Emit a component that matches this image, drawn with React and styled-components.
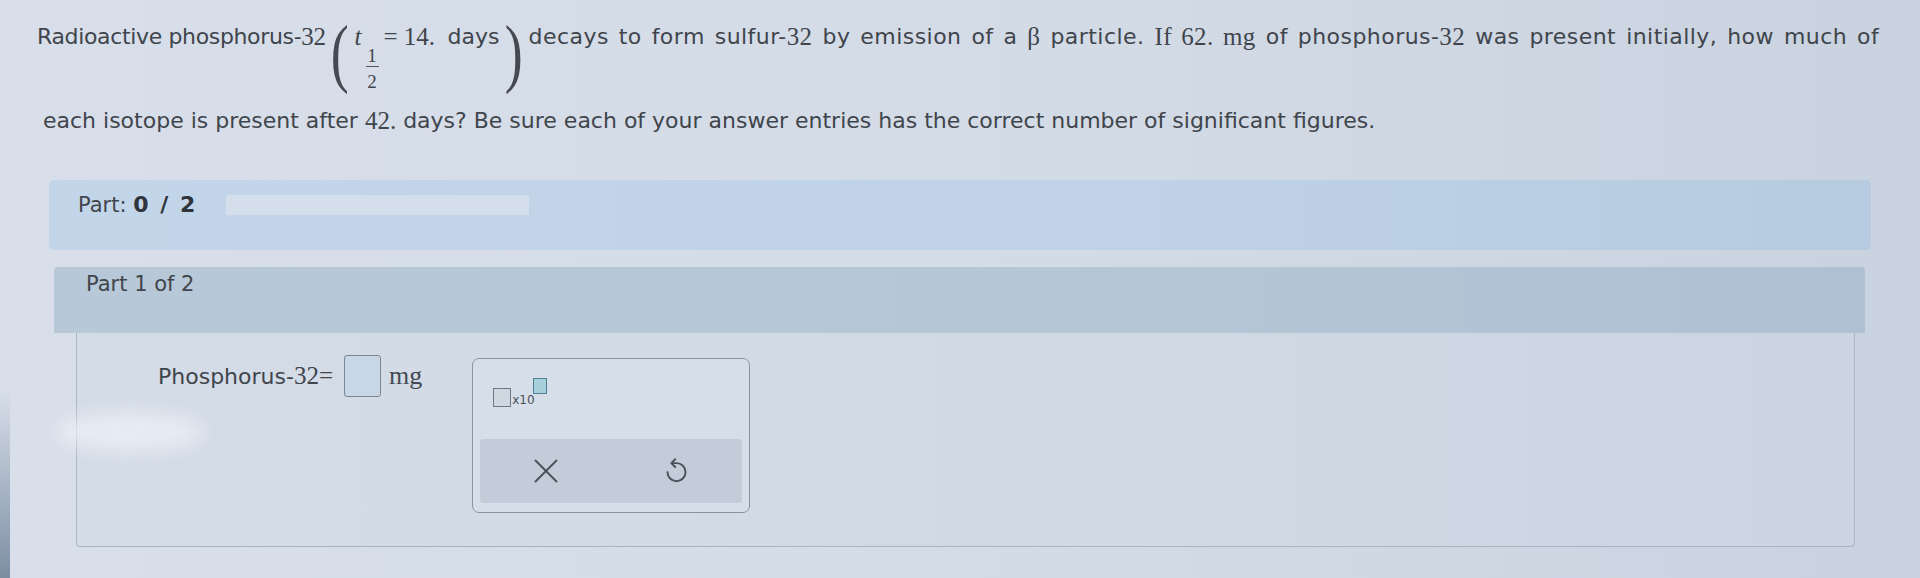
import React from "react";
import styled, { createGlobalStyle } from "styled-components";
import { X } from "lucide-react";

const GlobalStyle = createGlobalStyle`
  html, body { margin: 0; padding: 0; }
  body {
    width: 1920px;
    height: 578px;
    overflow: hidden;
    background:
      linear-gradient(180deg, rgba(127,144,164,0) 0%, #7d8ea3 100%) left 390px / 10px 188px no-repeat,
      linear-gradient(90deg, #d8dfea 0%, #d3dbe6 55%, #c9d2df 100%);
    font-family: "DejaVu Sans", Verdana, sans-serif;
    color: #40454c;
  }
`;

const Page = styled.div`
  position: relative;
  height: 578px;
`;

const Question = styled.div`
  padding: 23px 0 0 37px;
  font-size: 22px;
  line-height: 28px;
`;

const Line = styled.div`
  display: flex;
  align-items: flex-start;
  white-space: pre;
  margin-top: ${(p) => (p.second ? "15px" : "0")};
  padding-left: ${(p) => (p.second ? "6px" : "0")};
`;

/* the photo is stretched towards the top right, so the tail of line 1 runs wider */
const Stretch = styled.span`
  display: inline-flex;
  align-items: flex-start;
  letter-spacing: ${(p) => p.spacing || "0"};
  word-spacing: ${(p) => p.words || "0"};
`;

const Num = styled.span`
  font-family: "Liberation Serif", "Times New Roman", serif;
  font-size: 25px;
  font-style: ${(p) => (p.italic ? "italic" : "normal")};
`;

const Paren = styled.span`
  display: flex;
  align-items: center;
  justify-content: center;
  width: 23px;
  height: 72px;
  margin: -6px 3px 0;
  font-family: "Liberation Serif", serif;
  font-size: 40px;
  line-height: 1;
`;

const ParenGlyph = styled.span`
  display: inline-block;
  transform: scale(1.35, 1.9);
  color: #444a52;
`;

const Frac = styled.span`
  display: inline-flex;
  flex-direction: column;
  align-items: center;
  margin: 24px 5px 0 4px;
  font-family: "Liberation Serif", serif;
  font-size: 19px;
`;

const FracTop = styled.span`
  line-height: 18px;
`;

const FracBar = styled.span`
  width: 13px;
  height: 1px;
  background: #50565e;
  margin: 1px 0 5px;
`;

const FracBottom = styled.span`
  line-height: 20px;
`;

const ProgressPanel = styled.div`
  margin: 45px 49px 0 49px;
  height: 70px;
  box-sizing: border-box;
  padding: 11px 0 0 29px;
  border-radius: 5px;
  background: linear-gradient(90deg, #c3d5e9 0%, #bfd2e7 60%, #b7cbe0 100%);
  display: flex;
  align-items: flex-start;
  font-size: 21px;
  line-height: 28px;
`;

const Bold = styled.b`
  font-weight: 700;
  color: #2f343a;
  font-size: 22px;
  word-spacing: 4px;
`;

const Track = styled.div`
  width: 303px;
  height: 20px;
  margin: 4px 0 0 31px;
  border-radius: 2px;
  background: #d4dfeb;
`;

const PartHeader = styled.div`
  margin: 17px 55px 0 54px;
  height: 66px;
  box-sizing: border-box;
  padding: 3px 0 0 32px;
  border-radius: 4px 4px 0 0;
  background: linear-gradient(90deg, #b7c8d8 0%, #b5c6d6 60%, #aec0d2 100%);
  font-size: 21px;
  line-height: 28px;
`;

const PartBody = styled.div`
  margin: 0 65px 0 76px;
  height: 214px;
  box-sizing: border-box;
  border: 1px solid #aab5c3;
  border-top: none;
  border-radius: 0 0 4px 4px;
  background: linear-gradient(90deg, #d4dce7 0%, #d1d9e5 60%, #cbd4e1 100%);
  padding: 22px 0 0 81px;
  display: flex;
  align-items: flex-start;
`;

const AnswerRow = styled.div`
  display: flex;
  align-items: center;
  height: 42px;
  font-size: 22px;
`;

const AnswerBox = styled.div`
  width: 37px;
  height: 42px;
  box-sizing: border-box;
  margin-left: 11px;
  border: 1.5px solid #7c8793;
  border-radius: 3px;
  background: #c8d7e5;
`;

const Unit = styled.span`
  margin-left: 8px;
  font-family: "Liberation Serif", serif;
  font-size: 26px;
  color: #444a52;
`;

const Keypad = styled.div`
  margin: 3px 0 0 50px;
  width: 278px;
  box-sizing: border-box;
  padding: 19px 7px 9px;
  border: 1.5px solid #8a95a2;
  border-radius: 7px;
  background: #d6dee9;
`;

const Template = styled.div`
  display: flex;
  align-items: flex-end;
  height: 29px;
  margin-left: 13px;
`;

const Slot = styled.span`
  width: ${(p) => (p.small ? "14px" : "18px")};
  height: ${(p) => (p.small ? "16px" : "19px")};
  box-sizing: border-box;
  border: 1.5px solid ${(p) => (p.small ? "#4f7f90" : "#6e7883")};
  background: ${(p) => (p.small ? "#a7d0dc" : "#cfd7e1")};
  align-self: ${(p) => (p.small ? "flex-start" : "flex-end")};
  margin-left: ${(p) => (p.small ? "-2px" : "0")};
`;

const Times10 = styled.span`
  font-size: 12px;
  line-height: 13px;
  margin-left: 1px;
  color: #4a5058;
`;

const ButtonRow = styled.div`
  display: flex;
  height: 64px;
  margin-top: 32px;
  border-radius: 3px;
  background: #c3cdd9;
`;

const KeyButton = styled.div`
  flex: 1;
  display: flex;
  align-items: center;
  justify-content: center;
  color: #49515b;
`;

const Glare = styled.div`
  position: absolute;
  left: 55px;
  top: 412px;
  width: 150px;
  height: 40px;
  border-radius: 50%;
  background: rgba(238, 240, 247, 0.75);
  filter: blur(9px);
`;

const UndoIcon = () => (
  <svg width="31" height="31" viewBox="0 0 24 24" fill="none" stroke="currentColor" strokeWidth="1.5" strokeLinecap="round" strokeLinejoin="round">
    <path d="M8.5 5.5H12a7 7 0 1 1-7 7" />
    <path d="M11 2.5 8 5.5l3 3" />
  </svg>
);

export default function App() {
  return (
    <Page>
      <GlobalStyle />
      <Question>
        <Line>
          <Stretch spacing="-0.35px">
            <span>Radioactive phosphorus-</span>
            <Num>32</Num>
          </Stretch>
          <Paren><ParenGlyph>(</ParenGlyph></Paren>
          <Num italic>t</Num>
          <Frac>
            <FracTop>1</FracTop>
            <FracBar />
            <FracBottom>2</FracBottom>
          </Frac>
          <Num>= 14.  </Num>
          <span>days</span>
          <Paren><ParenGlyph>)</ParenGlyph></Paren>
          <Stretch spacing="0.45px" words="2.5px">
            <span>decays to form sulfur-</span>
            <Num>32</Num>
            <span> by emission of a </span>
            <Num>β</Num>
            <span> particle. </span>
            <Num>If 62. mg</Num>
            <span> of phosphorus-</span>
            <Num>32</Num>
            <span> was present initially, how much of</span>
          </Stretch>
        </Line>
        <Line second>
          <span>each isotope is present after </span>
          <Num>42.</Num>
          <span> days? Be sure each of your answer entries has the correct number of significant figures.</span>
        </Line>
      </Question>

      <ProgressPanel>
        <span>
          Part: <Bold>0 / 2</Bold>
        </span>
        <Track />
      </ProgressPanel>

      <PartHeader>Part 1 of 2</PartHeader>

      <PartBody>
        <AnswerRow>
          <span>Phosphorus-</span>
          <Num>32=</Num>
          <AnswerBox />
          <Unit>mg</Unit>
        </AnswerRow>
        <Keypad>
          <Template>
            <Slot />
            <Times10>x10</Times10>
            <Slot small />
          </Template>
          <ButtonRow>
            <KeyButton>
              <X size={42} strokeWidth={1.1} />
            </KeyButton>
            <KeyButton>
              <UndoIcon />
            </KeyButton>
          </ButtonRow>
        </Keypad>
      </PartBody>

      <Glare />
    </Page>
  );
}
